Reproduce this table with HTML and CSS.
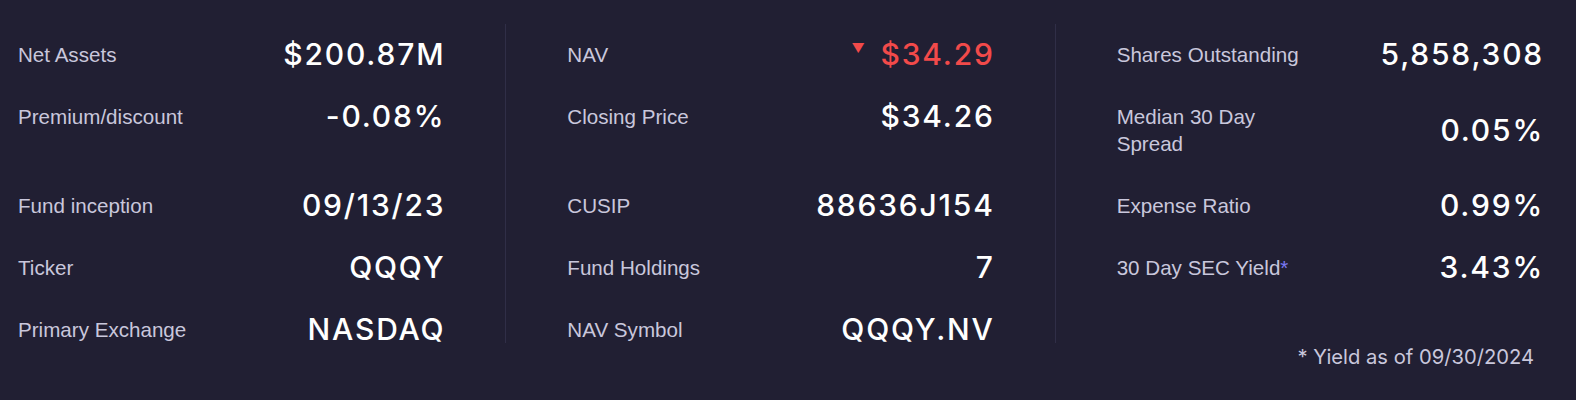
FILE: index.html
```html
<!DOCTYPE html>
<html lang="en">
<head>
<meta charset="utf-8">
<title>Fund Details</title>
<link rel="stylesheet" href="styles.css">
</head>
<body>
<section class="facts">
  <div class="cols">
    <div class="col">
      <div class="row"><span class="label">Net Assets</span><span class="value">$200.87M</span></div>
      <div class="row tall"><span class="label">Premium/discount</span><span class="value">-0.08%</span></div>
      <div class="row"><span class="label">Fund inception</span><span class="value">09/13/23</span></div>
      <div class="row"><span class="label">Ticker</span><span class="value">QQQY</span></div>
      <div class="row"><span class="label">Primary Exchange</span><span class="value">NASDAQ</span></div>
    </div>
    <div class="col">
      <div class="row"><span class="label">NAV</span><span class="value down"><span class="tri">&#9660;</span>$34.29</span></div>
      <div class="row tall"><span class="label">Closing Price</span><span class="value">$34.26</span></div>
      <div class="row"><span class="label">CUSIP</span><span class="value">88636J154</span></div>
      <div class="row"><span class="label">Fund Holdings</span><span class="value">7</span></div>
      <div class="row"><span class="label">NAV Symbol</span><span class="value">QQQY.NV</span></div>
    </div>
    <div class="col">
      <div class="row"><span class="label">Shares Outstanding</span><span class="value">5,858,308</span></div>
      <div class="row tall center"><span class="label narrow">Median 30 Day Spread</span><span class="value">0.05%</span></div>
      <div class="row"><span class="label">Expense Ratio</span><span class="value">0.99%</span></div>
      <div class="row"><span class="label">30 Day SEC Yield<span class="ast">*</span></span><span class="value">3.43%</span></div>
      <div class="row"></div>
    </div>
  </div>
  <p class="note">* Yield as of 09/30/2024</p>
</section>
</body>
</html>
```
FILE: styles.css
```css
html, body {
  margin: 0;
  padding: 0;
  background: #211f33;
}
body {
  font-family: "Liberation Sans", Arial, sans-serif;
  color: #c9c7dc;
}
.facts {
  padding: 24px 34px 0 18px;
}
.cols {
  display: flex;
}
.col {
  flex: 1 1 0;
  box-sizing: content-box;
  min-width: 0;
  display: flex;
  flex-direction: column;
  gap: 35px;
  padding: 17px 62px 0 61px;
  border-left: 1px solid #302e47;
}
.col:first-child {
  padding-left: 0;
  border-left: 0;
}
.col:last-child {
  padding-right: 0;
}
.row {
  display: flex;
  justify-content: space-between;
  align-items: flex-start;
  height: 27px;
}
.row.tall {
  height: 54px;
}
.row.center {
  align-items: center;
}
.label {
  font-size: 20.6px;
  line-height: 27px;
  color: #c9c7dc;
}
.label.narrow {
  max-width: 175px;
}
.ast {
  color: #7a78f2;
}
.value {
  font-family: "Inter", sans-serif;
  font-weight: 500;
  font-size: 30px;
  line-height: 27px;
  color: #ffffff;
  white-space: nowrap;
  letter-spacing: 1.8px;
  margin-right: -2px;
}
.value.down {
  color: #f24a4a;
  display: flex;
  align-items: center;
}
.tri {
  font-size: 13px;
  margin-right: 14px;
  position: relative;
  top: -6px;
}
.note {
  margin: 0;
  padding-right: 8px;
  text-align: right;
  font-family: "Inter", sans-serif;
  font-size: 20.2px;
  line-height: 27px;
  color: #c9c7dc;
}
```
